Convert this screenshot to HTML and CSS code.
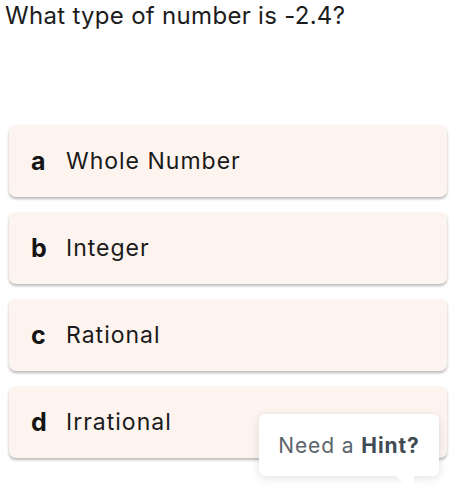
FILE: index.html
```html
<!DOCTYPE html>
<html>
<head>
<meta charset="utf-8">
<link rel="stylesheet" href="styles.css">
</head>
<body>
<div class="page">
  <h1 class="question">What type of number is -2.4?</h1>
  <div class="options">
    <div class="option"><span class="key">a</span><span class="label">Whole Number</span></div>
    <div class="option"><span class="key">b</span><span class="label">Integer</span></div>
    <div class="option"><span class="key">c</span><span class="label">Rational</span></div>
    <div class="option"><span class="key">d</span><span class="label">Irrational</span></div>
  </div>
  <div class="hint">
    <span class="hint-text">Need a <b>Hint?</b></span>
    <svg class="hint-tail" width="20" height="16" viewBox="0 0 20 16"><path d="M0 0 L19 0 L19 15 Z" fill="#ffffff"/></svg>
  </div>
</div>
</body>
</html>
```
FILE: styles.css
```css
html, body {
  margin: 0;
  padding: 0;
  background: #ffffff;
}
.page {
  position: relative;
  width: 454px;
  height: 490px;
  overflow: hidden;
  font-family: "Inter", "Open Sans", sans-serif;
  color: #1a1a1a;
}
.question {
  margin: 0;
  padding: 0 0 0 5px;
  font-size: 24px;
  font-weight: 400;
  line-height: 32px;
  letter-spacing: 0.3px;
  color: #1c1c1c;
}
.options {
  display: flex;
  flex-direction: column;
  gap: 15px;
  padding: 93px 7px 0 9px;
}
.option {
  height: 72px;
  box-sizing: border-box;
  display: flex;
  align-items: center;
  padding-left: 22px;
  background: #fdf3ef;
  border-radius: 7px;
  box-shadow: 0 2px 3px rgba(0,0,0,0.28);
}
.key {
  width: 35px;
  font-size: 25px;
  font-weight: 700;
  color: #141414;
}
.label {
  font-size: 23px;
  letter-spacing: 1px;
  color: #1a1a1a;
}
.hint {
  position: absolute;
  left: 259px;
  top: 414px;
  width: 180px;
  height: 62px;
  background: #ffffff;
  border-radius: 6px;
  box-shadow: 0 2px 10px rgba(0,0,0,0.12);
  display: flex;
  align-items: center;
  justify-content: center;
}
.hint-text {
  font-size: 21px;
  letter-spacing: 0.9px;
  color: #5b656c;
}
.hint-text b {
  font-weight: 700;
  color: #3f4b53;
}
.hint-tail {
  position: absolute;
  left: 136px;
  top: 62px;
}
```
